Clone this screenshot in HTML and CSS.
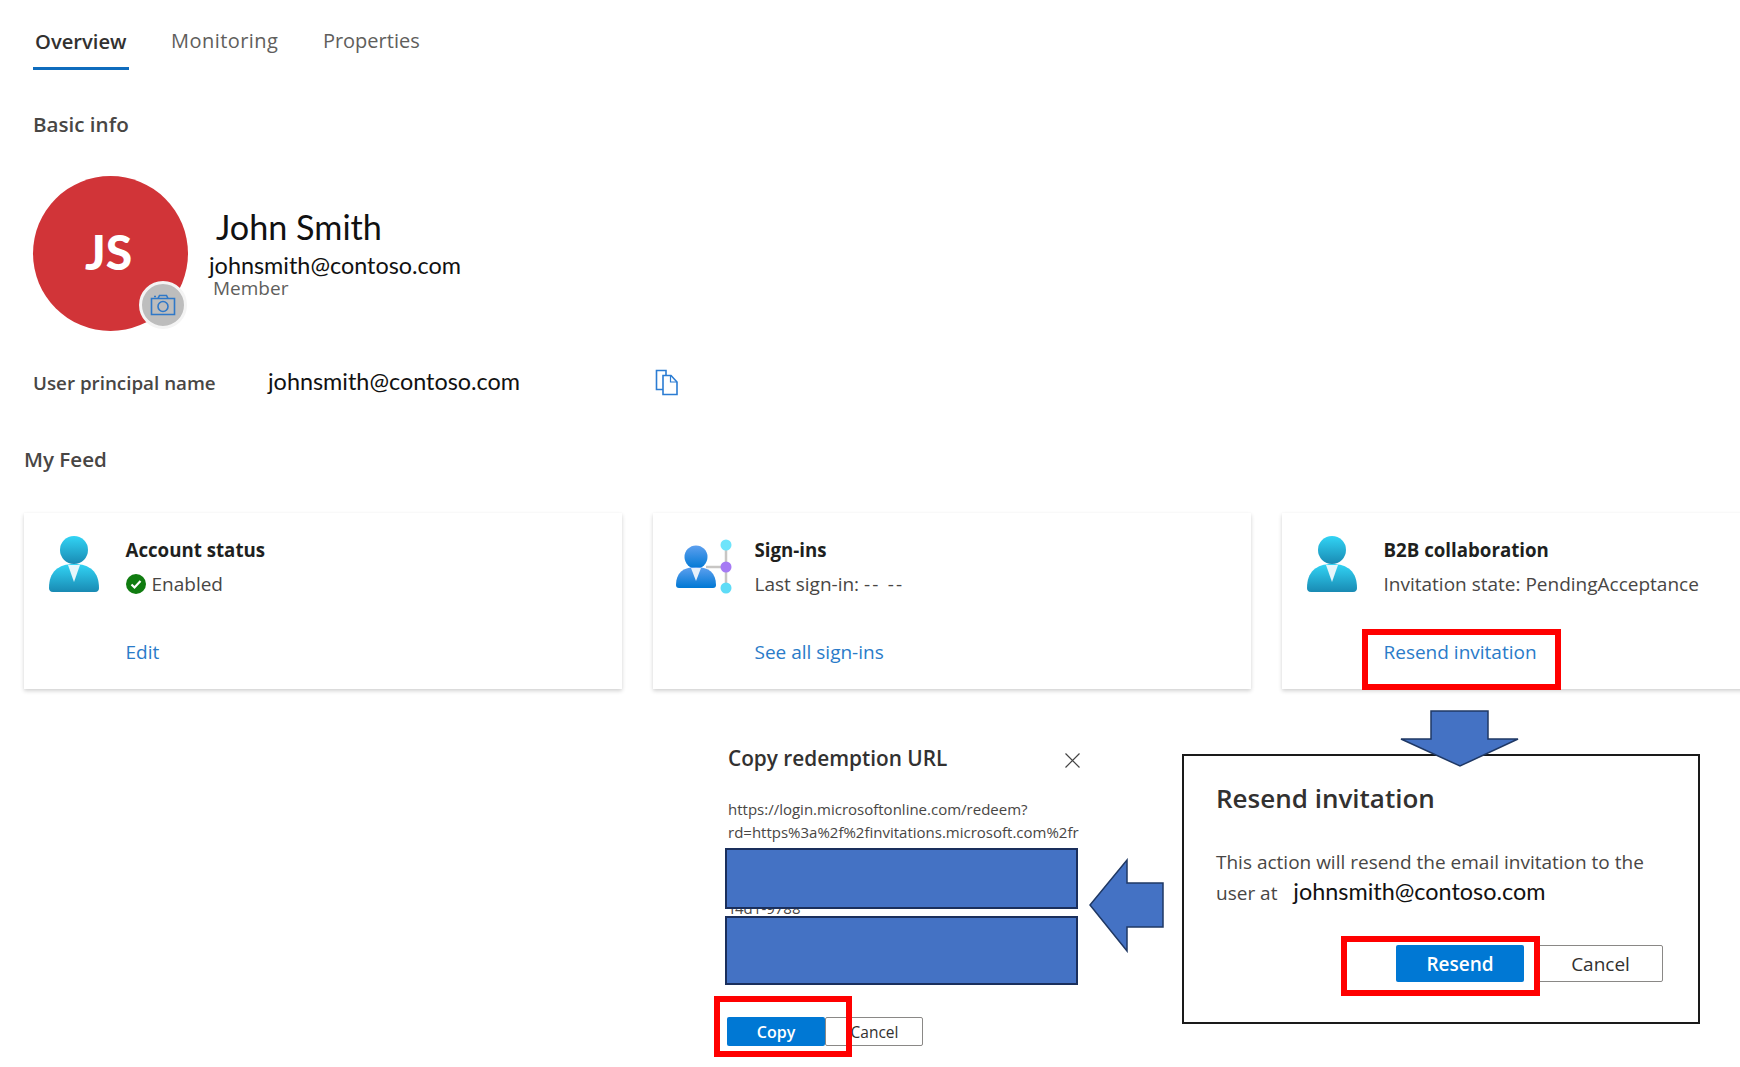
FILE: index.html
```html
<!DOCTYPE html>
<html lang="en">
<head>
<meta charset="utf-8">
<title>John Smith - Overview</title>
<link rel="stylesheet" href="styles.css">
</head>
<body>
<div class="page">
  <nav class="tabs">
    <span class="tab active">Overview</span>
    <span class="tab tab-wide">Monitoring</span>
    <span class="tab">Properties</span>
  </nav>

  <h2 class="section basic-title">Basic info</h2>

  <section class="profile">
    <div class="avatar">
      <span class="initials">JS</span>
      <span class="badge">
        <svg class="camera" viewBox="0 0 26 24" aria-hidden="true">
          <path d="M1.5 5.5h23v16h-23z" fill="none" stroke="#2f78c8" stroke-width="1.6"/>
          <path d="M8 5.5 9.5 2.5h7L18 5.5" fill="none" stroke="#2f78c8" stroke-width="1.6"/>
          <path d="M4 3.5h2" stroke="#2f78c8" stroke-width="1.4"/>
          <circle cx="13" cy="13.5" r="5" fill="none" stroke="#2f78c8" stroke-width="1.6"/>
        </svg>
      </span>
    </div>
    <div class="identity">
      <div class="name">John Smith</div>
      <div class="email">johnsmith@contoso.com</div>
      <div class="role">Member</div>
    </div>
  </section>

  <section class="upn">
    <span class="upn-label">User principal name</span>
    <span class="email upn-value">johnsmith@contoso.com</span>
    <svg class="copy" viewBox="0 0 24 27" aria-hidden="true">
      <path d="M11 6V1.5H1.5v19H8" fill="none" stroke="#2b7cd3" stroke-width="1.6"/>
      <path d="M8 6.5h8l6 6.5v12.5H8z" fill="#fff" stroke="#2b7cd3" stroke-width="1.6"/>
      <path d="M15.5 6.5V13H22" fill="none" stroke="#2b7cd3" stroke-width="1.2"/>
    </svg>
  </section>

  <h2 class="section feed-title">My Feed</h2>

  <section class="cards">
    <article class="card">
      <svg class="card-icon" viewBox="0 0 60 58" aria-hidden="true">
        <defs>
          <linearGradient id="cyan" x1="0" y1="0" x2="0" y2="1">
            <stop offset="0" stop-color="#32d4f5"/><stop offset="1" stop-color="#198ab3"/>
          </linearGradient>
        </defs>
        <circle cx="27" cy="14" r="14" fill="url(#cyan)"/>
        <path d="M2 52c0-16 9-24 25-24s25 8 25 24c0 2-1 4-4 4H6c-3 0-4-2-4-4z" fill="url(#cyan)"/>
        <path d="M21 29h12l-6 17z" fill="#e6f6fb"/>
      </svg>
      <div class="card-body">
        <h3 class="card-title">Account status</h3>
        <p class="card-line">
          <svg class="check" viewBox="0 0 20 20" aria-hidden="true">
            <circle cx="10" cy="10" r="10" fill="#107c10"/>
            <path d="M5.5 10.5 8.5 13.5 14.5 7" fill="none" stroke="#fff" stroke-width="2.2"/>
          </svg>
          <span class="status-text">Enabled</span>
        </p>
        <a class="card-link">Edit</a>
      </div>
    </article>

    <article class="card">
      <svg class="card-icon" viewBox="0 0 60 58" aria-hidden="true">
        <defs>
          <linearGradient id="blue" x1="0" y1="0" x2="0" y2="1">
            <stop offset="0" stop-color="#5ea0ef"/><stop offset="1" stop-color="#0078d4"/>
          </linearGradient>
        </defs>
        <path d="M30 31H50M50 10V52" stroke="#c8c6c4" stroke-width="2.5" fill="none"/>
        <circle cx="20" cy="21" r="11.5" fill="url(#blue)"/>
        <path d="M0 49c0-12 7-18 20-18s20 6 20 18c0 2-1 3-3 3H3c-2 0-3-1-3-3z" fill="url(#blue)"/>
        <path d="M15 32h10l-5 13z" fill="#e6f0fb"/>
        <circle cx="50" cy="9" r="5.5" fill="#6ee4fb"/>
        <circle cx="50" cy="31" r="5.5" fill="#a67af4"/>
        <circle cx="50" cy="52" r="5.5" fill="#5edcf7"/>
      </svg>
      <div class="card-body">
        <h3 class="card-title">Sign-ins</h3>
        <p class="card-line"><span>Last sign-in: <span class="dashes">-- --</span></span></p>
        <a class="card-link">See all sign-ins</a>
      </div>
    </article>

    <article class="card">
      <svg class="card-icon" viewBox="0 0 60 58" aria-hidden="true">
        <circle cx="27" cy="14" r="14" fill="url(#cyan)"/>
        <path d="M2 52c0-16 9-24 25-24s25 8 25 24c0 2-1 4-4 4H6c-3 0-4-2-4-4z" fill="url(#cyan)"/>
        <path d="M21 29h12l-6 17z" fill="#e6f6fb"/>
      </svg>
      <div class="card-body">
        <h3 class="card-title">B2B collaboration</h3>
        <p class="card-line">Invitation state: PendingAcceptance</p>
        <a class="card-link">Resend invitation</a>
      </div>
    </article>
  </section>

  <section class="lower">
    <div class="copy-dialog">
      <header class="copy-head">
        <h3 class="copy-title">Copy redemption URL</h3>
        <svg class="close" viewBox="0 0 15 15" aria-hidden="true">
          <path d="M.5.5l14 14M14.5.5l-14 14" stroke="#444" stroke-width="1.2" fill="none"/>
        </svg>
      </header>
      <p class="url">https://login.microsoftonline.com/redeem?<br>rd=https%3a%2f%2finvitations.microsoft.com%2fr</p>
      <div class="redact redact-one"></div>
      <div class="remnant"><span>f4d1-9788</span></div>
      <div class="redact redact-two"></div>
      <div class="copy-actions">
        <button class="btn primary copy-ok">Copy</button>
        <button class="btn plain copy-cancel">Cancel</button>
      </div>
    </div>

    <div class="resend-dialog">
      <h3 class="resend-title">Resend invitation</h3>
      <p class="resend-body">This action will resend the email invitation to the<br>user at <span class="resend-email">johnsmith@contoso.com</span></p>
      <div class="resend-actions">
        <button class="btn primary resend-ok">Resend</button>
        <button class="btn plain resend-cancel">Cancel</button>
      </div>
    </div>
  </section>

  <div class="mark mark-link"></div>
  <div class="mark mark-copy"></div>
  <div class="mark mark-resend"></div>

  <svg class="arrow arrow-down" viewBox="0 0 120 58" aria-hidden="true">
    <path d="M32 2H89V30H119L61 57 2 30H32z" fill="#4472c4" stroke="#1f3864" stroke-width="1.5"/>
  </svg>
  <svg class="arrow arrow-left" viewBox="0 0 76 95" aria-hidden="true">
    <path d="M75 25V69H39V93L2 47 39 2V25z" fill="#4472c4" stroke="#1f3864" stroke-width="1.5"/>
  </svg>
</div>
</body>
</html>
```

FILE: styles.css
```css
* { box-sizing: border-box; }
html, body { margin: 0; padding: 0; background: #fff; }
h2, h3, p { margin: 0; font-weight: 400; }

.page {
  position: relative;
  width: 1740px;
  height: 1067px;
  overflow: hidden;
  background: #fff;
  color: #323130;
  font-family: "Open Sans", "Noto Sans", sans-serif;
  font-size: 19px;
}

/* tabs */
.tabs { display: flex; gap: 40.5px; height: 70px; padding-left: 33px; align-items: flex-end; }
.tab {
  height: 70px;
  padding: 26px 2px 0;
  font-size: 20px;
  line-height: 30px;
  color: #605e5c;
}
.tab-wide { letter-spacing: .45px; }
.tab.active { color: #323130; font-weight: 600; font-size: 20.2px; border-bottom: 3px solid #0f6cbd; }

.section { font-size: 20.6px; line-height: 28px; font-weight: 600; color: #484644; }
.basic-title { margin: 40px 0 0 33px; }
.feed-title { margin: 45px 0 0 24px; }

/* profile */
.profile { display: flex; gap: 21px; margin: 38px 0 0 33px; }
.avatar {
  position: relative;
  flex: none;
  width: 155px;
  height: 155px;
  border-radius: 50%;
  background: #d13438;
  display: flex;
  align-items: center;
  justify-content: center;
}
.initials { margin: 0 4px 4px 0; color: #fff; font-family: Lato, sans-serif; font-weight: 900; font-size: 48px; line-height: 1; }
.badge {
  position: absolute;
  left: 106px;
  top: 105px;
  width: 48px;
  height: 48px;
  border-radius: 50%;
  background: #bdbdbd;
  border: 3px solid #f4f4f4;
  display: flex;
  align-items: center;
  justify-content: center;
}
.camera { width: 26px; height: 24px; }
.identity { padding-top: 30px; }
.name { padding-left: 7px; margin-bottom: 4px; font-family: Lato, sans-serif; font-size: 34.2px; line-height: 42px; color: #111; }
.email { font-family: Lato, sans-serif; font-size: 23.4px; line-height: 26px; color: #111; }
.role { padding-left: 4px; font-size: 19px; line-height: 20px; color: #605e5c; }

/* upn */
.upn {
  display: grid;
  grid-template-columns: 234px 388px auto;
  align-items: center;
  justify-content: start;
  height: 36px;
  margin: 33px 0 0 33px;
}
.upn-label { padding-top: 2px; font-size: 18.8px; font-weight: 600; color: #484644; }
.upn-value { padding: 0 0 2px 1px; }
.copy { width: 24px; height: 27px; }

/* cards */
.cards { display: flex; gap: 31px; margin: 40px 0 0 24px; width: 1900px; }
.card {
  display: flex;
  flex: none;
  width: 598px;
  height: 176px;
  padding: 23px 0 0 23px;
  background: #fff;
  box-shadow: 0 2px 4px rgba(0, 0, 0, .18), 0 0 1px rgba(0, 0, 0, .04);
}
.card-icon { flex: none; width: 60px; height: 58px; margin-right: 18.5px; }
.card-body { display: flex; flex-direction: column; align-items: flex-start; padding-top: 1px; }
.card-title { font-size: 18.7px; line-height: 26px; font-weight: 700; color: #201f1e; }
.card-line { display: flex; align-items: center; gap: 6px; margin-top: 8px; font-size: 19px; line-height: 26px; color: #484644; }
.dashes { letter-spacing: 2.2px; }
.check { width: 20px; height: 20px; }
.card-link { margin-top: 42px; font-size: 19px; line-height: 26px; color: #2a7bc9; }

/* lower */
.lower { display: flex; gap: 100px; margin: 55px 0 0 725px; }
.copy-dialog { flex: none; width: 357px; }
.copy-head { display: flex; align-items: center; justify-content: space-between; height: 28px; padding: 0 2px 0 3px; }
.copy-title { font-size: 20.8px; line-height: 28px; font-weight: 600; color: #323130; }
.close { width: 15px; height: 15px; margin-top: 4px; }
.url { margin-top: 26px; padding-left: 3px; font-size: 15px; line-height: 23px; white-space: nowrap; color: #484644; }
.redact { width: 353px; background: #4472c4; border: 2px solid #1a2f5c; }
.redact-one { height: 61px; margin-top: 4px; }
.redact-two { height: 69px; }
.remnant { height: 7px; overflow: hidden; padding-left: 5px; font-size: 15px; line-height: 6px; color: #484644; }
.remnant span { display: block; margin-top: -4px; }
.copy-actions { display: flex; margin: 32px 0 0 2px; }

.btn { display: block; padding: 0; border-radius: 2px; font-family: inherit; font-weight: 600; }
.primary { background: #0078d4; border: 0; color: #fff; }
.plain { background: #fff; border: 1.5px solid #8a8886; color: #323130; font-weight: 400; }
.copy-ok { width: 98px; height: 29px; font-size: 16px; }
.copy-cancel { width: 98px; height: 29px; padding-left: 1px; font-size: 15.5px; }

.resend-dialog {
  flex: none;
  width: 518px;
  height: 270px;
  margin-top: 10px;
  padding: 24px 35px 0 32px;
  border: 2px solid #1a1a1a;
}
.resend-title { font-size: 26px; line-height: 36px; font-weight: 600; color: #323130; }
.resend-body { margin-top: 32px; font-size: 19px; line-height: 29px; color: #484644; white-space: nowrap; }
.resend-email { margin-left: 11px; font-family: Lato, sans-serif; font-size: 23.4px; color: #111; }
.resend-actions { display: flex; justify-content: flex-end; margin-top: 37px; }
.resend-ok { width: 128px; height: 37px; margin-right: 14px; font-size: 19px; }
.resend-cancel { width: 125px; height: 37px; font-size: 19px; }

/* annotations drawn over the screenshot */
.mark { position: absolute; border: 6px solid #f00; }
.mark-link { left: 1362px; top: 629px; width: 199px; height: 61px; }
.mark-copy { left: 714px; top: 996px; width: 138px; height: 61px; }
.mark-resend { left: 1341px; top: 936px; width: 199px; height: 60px; }

.arrow { position: absolute; }
.arrow-down { left: 1399px; top: 709px; width: 120px; height: 58px; }
.arrow-left { left: 1088px; top: 858px; width: 76px; height: 95px; }
```
